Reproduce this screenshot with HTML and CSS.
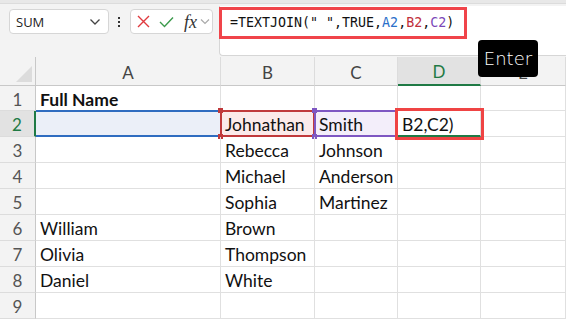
FILE: index.html
```html
<!DOCTYPE html>
<html lang="en">
<head>
	<meta charset="utf-8">
	<title>TEXTJOIN</title>
	<meta name="viewport" content="width=device-width, initial-scale=1">
	<link rel="stylesheet" href="styles.css">
</head>
<body>
	<div class="app">
		<div class="topband"></div>
		<div class="toolbar">
			<div class="namebox">
				<span>SUM</span>
				<svg width="12" height="8" viewBox="0 0 12 8"><path d="M1.5 1.5 L6 6 L10.5 1.5" fill="none" stroke="#444" stroke-width="1.3"/></svg>
			</div>
			<div class="dots"><i></i><i></i><i></i></div>
			<div class="fbuttons">
				<svg width="13" height="13" viewBox="0 0 13 13"><path d="M1 1 L12 12 M12 1 L1 12" stroke="#e0393e" stroke-width="1.4"/></svg>
				<svg width="15" height="12" viewBox="0 0 15 12"><path d="M1 6 L5.5 10.5 L14 1.5" fill="none" stroke="#3c9a4c" stroke-width="1.4"/></svg>
				<span class="fx">fx</span>
				<svg width="10" height="7" viewBox="0 0 10 7"><path d="M1 1.5 L5 5.5 L9 1.5" fill="none" stroke="#aaa" stroke-width="1.2"/></svg>
			</div>
			<div class="formulabar">
				<div class="formula">=TEXTJOIN(" ",TRUE,<span class="ref-a">A2</span>,<span class="ref-b">B2</span>,<span class="ref-c">C2</span>)</div>
			</div>
		</div>
		<div class="sheet">
			<div class="corner"><div class="tri"></div></div>
			<div class="colhead">A</div>
			<div class="colhead">B</div>
			<div class="colhead">C</div>
			<div class="colhead active">D</div>
			<div class="colhead">E</div>

			<div class="rowhead">1</div>
			<div class="cell bold">Full Name</div>
			<div class="cell"></div><div class="cell"></div><div class="cell"></div><div class="cell"></div>

			<div class="rowhead active">2</div>
			<div class="cell sel-a"></div>
			<div class="cell sel-b">Johnathan<i class="h tl"></i><i class="h tr"></i><i class="h bl"></i><i class="h br"></i></div>
			<div class="cell sel-c">Smith<i class="h tl"></i><i class="h tr"></i><i class="h bl"></i><i class="h br"></i></div>
			<div class="cell editing">B2,C2)</div>
			<div class="cell"></div>

			<div class="rowhead">3</div>
			<div class="cell"></div><div class="cell">Rebecca</div><div class="cell">Johnson</div><div class="cell"></div><div class="cell"></div>

			<div class="rowhead">4</div>
			<div class="cell"></div><div class="cell">Michael</div><div class="cell">Anderson</div><div class="cell"></div><div class="cell"></div>

			<div class="rowhead">5</div>
			<div class="cell"></div><div class="cell">Sophia</div><div class="cell">Martinez</div><div class="cell"></div><div class="cell"></div>

			<div class="rowhead">6</div>
			<div class="cell">William</div><div class="cell">Brown</div><div class="cell"></div><div class="cell"></div><div class="cell"></div>

			<div class="rowhead">7</div>
			<div class="cell">Olivia</div><div class="cell">Thompson</div><div class="cell"></div><div class="cell"></div><div class="cell"></div>

			<div class="rowhead">8</div>
			<div class="cell">Daniel</div><div class="cell">White</div><div class="cell"></div><div class="cell"></div><div class="cell"></div>

			<div class="rowhead">9</div>
			<div class="cell"></div><div class="cell"></div><div class="cell"></div><div class="cell"></div><div class="cell"></div>
		</div>
		<div class="tooltip">Enter</div>
	</div>
</body>
</html>
```

FILE: styles.css
```css
html, body {
	margin: 0;
	padding: 0;
	background: #fff;
}
.app {
	position: relative;
	width: 566px;
	height: 320px;
	overflow: hidden;
	font-family: "Open Sans", "Noto Sans", sans-serif;
}
.topband {
	height: 3px;
	background: #e8e8e8;
	border-bottom: 1px solid #dcdcdc;
}
.toolbar {
	height: 53px;
	background: #f3f3f3;
	display: flex;
	align-items: flex-start;
	padding-left: 9px;
	box-sizing: border-box;
}
.namebox {
	margin-top: 5px;
	width: 100px;
	height: 25px;
	box-sizing: border-box;
	background: #fff;
	border: 1px solid #d6d6d6;
	border-radius: 4px;
	display: flex;
	align-items: center;
	justify-content: space-between;
	padding: 0 7px 0 6px;
	font-size: 13px;
	color: #222;
}
.dots {
	margin: 13px 0 0 9px;
	width: 3px;
	display: flex;
	flex-direction: column;
	gap: 2px;
}
.dots i {
	display: block;
	width: 2px;
	height: 2px;
	background: #333;
}
.fbuttons {
	margin: 5px 0 0 9px;
	width: 83px;
	height: 25px;
	box-sizing: border-box;
	background: #fff;
	border: 1px solid #d6d6d6;
	border-radius: 4px;
	display: flex;
	align-items: center;
	padding-left: 6px;
	gap: 9px;
}
.fbuttons .fx {
	font-family: "Liberation Serif", serif;
	font-style: italic;
	font-size: 18px;
	color: #333;
	margin-left: 1px;
	margin-right: -6px;
	line-height: 1;
}
.formulabar {
	margin-left: 6px;
	margin-top: 2px;
	flex: 1;
	height: 49px;
	background: #fff;
	border-left: 1px solid #d6d6d6;
	border-bottom: 1px solid #d6d6d6;
	border-bottom-left-radius: 4px;
	position: relative;
}
.formula {
	position: absolute;
	left: -1px;
	top: 1px;
	width: 248px;
	height: 32px;
	box-sizing: border-box;
	border: 3px solid #f0444a;
	padding: 0 0 0 8px;
	line-height: 26px;
	font-family: "DejaVu Sans Mono", "Liberation Mono", monospace;
	font-size: 13.3px;
	color: #111;
	white-space: nowrap;
}
.ref-a { color: #2a6fc9; }
.ref-b { color: #c0303c; }
.ref-c { color: #7b47b8; }

.sheet {
	display: grid;
	grid-template-columns: 36px 185px 94px 83px 83px 85px;
	grid-template-rows: 29px 25px repeat(8, 26px);
	font-family: "Lato", "Open Sans", sans-serif;
}
.corner {
	background: #f3f3f3;
	border-right: 1px solid #c8c8c8;
	border-bottom: 1px solid #c8c8c8;
	position: relative;
}
.tri {
	position: absolute;
	right: 3px;
	bottom: 3px;
	width: 0;
	height: 0;
	border-left: 16px solid transparent;
	border-bottom: 16px solid #dcdcdc;
}
.colhead {
	background: #f3f3f3;
	border-right: 1px solid #dcdcdc;
	border-bottom: 1px solid #c8c8c8;
	display: flex;
	align-items: center;
	justify-content: center;
	font-size: 17px;
	color: #444;
	padding-top: 2px;
}
.colhead.active {
	background: #e2e2e2;
	color: #1f7a45;
	border-bottom: 2px solid #1f7a45;
}
.rowhead {
	background: #f3f3f3;
	border-right: 1px solid #c8c8c8;
	border-bottom: 1px solid #dcdcdc;
	display: flex;
	align-items: center;
	justify-content: center;
	font-size: 17px;
	color: #555;
	padding-top: 2px;
}
.rowhead.active {
	background: #e2e2e2;
	color: #1f7a45;
	border-right: 2px solid #1f7a45;
}
.cell {
	position: relative;
	border-right: 1px solid #e0e0e0;
	border-bottom: 1px solid #e0e0e0;
	display: flex;
	align-items: center;
	padding: 2px 0 0 4px;
	font-size: 17.5px;
	color: #111;
	white-space: nowrap;
}
.cell.bold {
	font-weight: bold;
}
.sel-a {
	background: #ebeff8;
	border-top: 2px solid #2f6cc0;
	border-bottom: 2px solid #2f6cc0;
	margin-top: -1px;
}
.sel-b {
	background: #fbeaea;
	border: 2px solid #c0393b;
	margin: -1px 0 0 -1px;
	padding-left: 3px;
}
.sel-c {
	background: #f3eefa;
	border: 2px solid #7e57c2;
	margin: -1px 0 0 -1px;
	padding-left: 3px;
}
.h {
	position: absolute;
	width: 5px;
	height: 5px;
}
.sel-b .h { background: #c0393b; }
.sel-c .h { background: #7e57c2; }
.h.tl { left: -4px; top: -4px; }
.h.tr { right: -4px; top: -4px; }
.h.bl { left: -4px; bottom: -4px; }
.h.br { right: -4px; bottom: -4px; }
.editing {
	outline: 3px solid #ef4444;
	z-index: 2;
	border-bottom: 2px solid #1f7a45;
	background: #fff;
}
.tooltip {
	position: absolute;
	left: 478px;
	top: 40px;
	width: 60px;
	height: 37px;
	background: #000;
	border-radius: 4px;
	color: #fff;
	font-family: "DejaVu Sans", sans-serif;
	font-weight: 300;
	font-size: 18px;
	display: flex;
	align-items: center;
	justify-content: center;
}
```
